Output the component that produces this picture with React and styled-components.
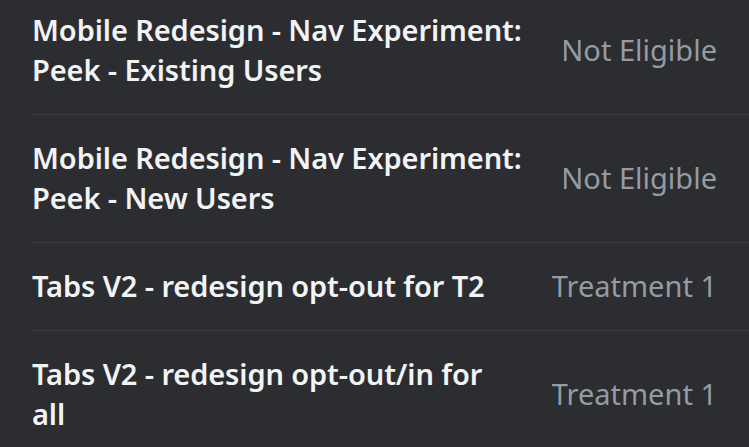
import React from "react";
import styled, { createGlobalStyle } from "styled-components";

const Global = createGlobalStyle`
  html, body { margin: 0; padding: 0; background: #2b2d31; overflow: hidden; }
  body { font-family: "Noto Sans", "Open Sans", sans-serif; }
`;

const Screen = styled.div`
  width: 749px;
  height: 447px;
  overflow: hidden;
  background: #2b2d31;
`;

const List = styled.div`
  display: flex;
  flex-direction: column;
  margin-top: -13px;
  padding-left: 32px;
`;

const Row = styled.div`
  display: flex;
  align-items: center;
  padding: 23px 32px 24px 0;
  border-bottom: 1px solid #3b3d43;
  &:last-child { border-bottom: none; }
`;

const Label = styled.div`
  flex: 1;
  min-width: 0;
  color: #f2f3f5;
  font-size: 29px;
  font-weight: 600;
  letter-spacing: -0.1px;
  line-height: 40px;
  white-space: pre-line;
`;

const Value = styled.div`
  margin-left: 24px;
  color: #949ba4;
  font-size: 29px;
  font-weight: 400;
  line-height: 40px;
  white-space: nowrap;
`;

const rows = [
  ["Mobile Redesign - Nav Experiment:\nPeek - Existing Users", "Not Eligible"],
  ["Mobile Redesign - Nav Experiment:\nPeek - New Users", "Not Eligible"],
  ["Tabs V2 - redesign opt-out for T2", "Treatment 1"],
  ["Tabs V2 - redesign opt-out/in for\nall", "Treatment 1"],
];

export default function App() {
  return (
    <Screen>
      <Global />
      <List>
        {rows.map(([l, v]) => (
          <Row key={l}>
            <Label>{l}</Label>
            <Value>{v}</Value>
          </Row>
        ))}
      </List>
    </Screen>
  );
}
